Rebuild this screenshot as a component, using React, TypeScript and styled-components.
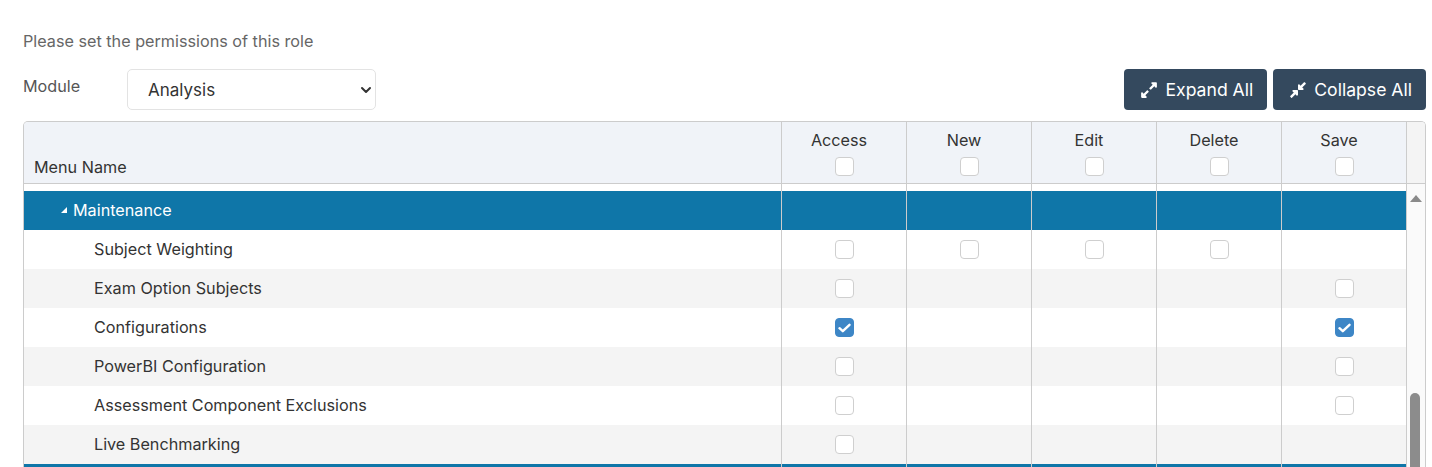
import styled, { createGlobalStyle } from "styled-components";
import { FaExpandAlt, FaCompressAlt } from "react-icons/fa";

const GlobalStyle = createGlobalStyle`
  html, body {
    margin: 0;
    padding: 0;
    height: 100%;
    overflow: hidden;
    background: #fff;
    font-family: Inter, "Noto Sans", "Liberation Sans", sans-serif;
  }
`;

const Page = styled.div`
  padding: 31px 0 0 23px;
  width: 1403px;
`;

const Intro = styled.div`
  font-size: 16.2px;
  color: #666;
  height: 20px;
  line-height: 20px;
`;

const Toolbar = styled.div`
  display: flex;
  align-items: center;
  margin-top: 18px;
  height: 41px;
`;

const Label = styled.label`
  width: 104px;
  font-size: 16.2px;
  color: #555;
  margin-top: -7px;
`;

const SelectBox = styled.div`
  position: relative;
  width: 249px;
  height: 41px;
  box-sizing: border-box;
  border: 1px solid #e3e3e3;
  border-radius: 5px;
  display: flex;
  align-items: center;
  padding-left: 20px;
  font-size: 17px;
  color: #333;
  svg {
    position: absolute;
    right: 3px;
    top: 16px;
  }
`;

const Spacer = styled.div`
  flex: 1;
`;

const ActionButton = styled.button`
  display: flex;
  align-items: center;
  gap: 7px;
  height: 41px;
  padding: 0 14px 0 16px;
  margin-left: 6px;
  border: none;
  border-radius: 4px;
  background: #34495e;
  color: #fff;
  font-family: inherit;
  font-size: 17.6px;
  svg {
    flex: none;
    width: 18px;
    height: 18px;
  }
`;

const Table = styled.div`
  margin-top: 11px;
  border: 1px solid #ccc;
  border-bottom: none;
  border-radius: 5px 5px 0 0;
  overflow: hidden;
  height: 400px;
`;

const cols = "758px repeat(5, 125px) 18px";

const HeadRow = styled.div`
  display: grid;
  grid-template-columns: ${cols};
  height: 62px;
  background: #f0f3f8;
  border-bottom: 1px solid #ccc;
  box-sizing: border-box;
  color: #333;
  font-size: 16.2px;
`;

const HeadCell = styled.div<{ $name?: boolean; $last?: boolean }>`
  border-right: ${(p) => (p.$last ? "none" : "1px solid #ccc")};
  background: ${(p) => (p.$last ? "#f4f4f4" : "transparent")};
  display: flex;
  flex-direction: column;
  align-items: ${(p) => (p.$name ? "flex-start" : "center")};
  justify-content: ${(p) => (p.$name ? "flex-end" : "flex-start")};
  padding: ${(p) => (p.$name ? "0 0 6px 10px" : "8px 0 0")};
  gap: 7px;
  line-height: 20px;
`;

const HeadLabel = styled.span`
  margin-right: 10px;
`;

const Body = styled.div`
  display: flex;
`;

const Rows = styled.div`
  flex: none;
`;

const Row = styled.div<{ $kind: "white" | "grey" | "group" | "gap" }>`
  display: grid;
  grid-template-columns: 758px repeat(5, 125px);
  height: ${(p) => (p.$kind === "gap" ? "7px" : "39px")};
  background: ${(p) =>
    p.$kind === "group" ? "#0f76a8" : p.$kind === "grey" ? "#f4f4f4" : "#fff"};
  color: ${(p) => (p.$kind === "group" ? "#fff" : "#333")};
  font-size: 16.2px;
`;

const Cell = styled.div<{ $indent?: number }>`
  border-right: 1px solid #ccc;
  display: flex;
  align-items: center;
  justify-content: ${(p) => (p.$indent !== undefined ? "flex-start" : "center")};
  padding-left: ${(p) => p.$indent ?? 0}px;
  padding-bottom: ${(p) => (p.$indent !== undefined ? "2px" : "0")};
  gap: 5px;
`;

const ScrollTrack = styled.div`
  position: relative;
  width: 18px;
  background: #fafafa;
  height: 300px;
`;

const ScrollArrow = styled.div`
  position: absolute;
  left: 3px;
  top: 11px;
  width: 0;
  height: 0;
  border-left: 6px solid transparent;
  border-right: 6px solid transparent;
  border-bottom: 7px solid #8a8a8a;
`;

const ScrollThumb = styled.div`
  position: absolute;
  left: 3px;
  top: 209px;
  width: 10px;
  height: 120px;
  border-radius: 5px;
  background: #8c8c8c;
`;

const Box = styled.span<{ $checked?: boolean }>`
  width: 19px;
  height: 19px;
  box-sizing: border-box;
  border-radius: 4px;
  border: 1px solid ${(p) => (p.$checked ? "#3d86c6" : "#cfcfcf")};
  background: ${(p) => (p.$checked ? "#3d86c6" : "#fff")};
  display: flex;
  align-items: center;
  justify-content: center;
`;

function Check({ checked }: { checked?: boolean }) {
  return (
    <Box $checked={checked}>
      {checked && (
        <svg width="13" height="10" viewBox="0 0 13 10">
          <path d="M1.5 5.2 L4.8 8.2 L11.5 1.8" fill="none" stroke="#fff" strokeWidth="2.4" strokeLinecap="round" strokeLinejoin="round" />
        </svg>
      )}
    </Box>
  );
}

type Perm = null | boolean;
const items: { name: string; perms: Perm[] }[] = [
  { name: "Subject Weighting", perms: [false, false, false, false, null] },
  { name: "Exam Option Subjects", perms: [false, null, null, null, false] },
  { name: "Configurations", perms: [true, null, null, null, true] },
  { name: "PowerBI Configuration", perms: [false, null, null, null, false] },
  { name: "Assessment Component Exclusions", perms: [false, null, null, null, false] },
  { name: "Live Benchmarking", perms: [false, null, null, null, null] },
];

const headers = ["Access", "New", "Edit", "Delete", "Save"];

export default function App() {
  return (
    <>
      <GlobalStyle />
      <Page>
        <Intro>Please set the permissions of this role</Intro>
        <Toolbar>
          <Label>Module</Label>
          <SelectBox>
            Analysis
            <svg width="12" height="8" viewBox="0 0 12 8">
              <path d="M2 2 L6 6 L10 2" fill="none" stroke="#333" strokeWidth="2" strokeLinecap="round" strokeLinejoin="round" />
            </svg>
          </SelectBox>
          <Spacer />
          <ActionButton>
            <FaExpandAlt />
            Expand All
          </ActionButton>
          <ActionButton>
            <FaCompressAlt />
            Collapse All
          </ActionButton>
        </Toolbar>
        <Table>
          <HeadRow>
            <HeadCell $name>Menu Name</HeadCell>
            {headers.map((h) => (
              <HeadCell key={h}>
                <HeadLabel>{h}</HeadLabel>
                <Check />
              </HeadCell>
            ))}
            <HeadCell $last />
          </HeadRow>
          <Body>
            <Rows>
              <Row $kind="gap">
                <Cell />
                {headers.map((h) => (
                  <Cell key={h} />
                ))}
              </Row>
              <Row $kind="group">
                <Cell $indent={36}>
                  <svg width="8" height="8" viewBox="0 0 8 8">
                    <path d="M7 1 L7 7 L1 7 Z" fill="#fff" />
                  </svg>
                  Maintenance
                </Cell>
                {headers.map((h) => (
                  <Cell key={h} />
                ))}
              </Row>
              {items.map((it, i) => (
                <Row key={it.name} $kind={i % 2 === 0 ? "white" : "grey"}>
                  <Cell $indent={70}>{it.name}</Cell>
                  {it.perms.map((p, j) => (
                    <Cell key={j}>{p !== null && <Check checked={p} />}</Cell>
                  ))}
                </Row>
              ))}
              <Row $kind="group">
                <Cell />
                {headers.map((h) => (
                  <Cell key={h} />
                ))}
              </Row>
            </Rows>
            <ScrollTrack>
              <ScrollArrow />
              <ScrollThumb />
            </ScrollTrack>
          </Body>
        </Table>
      </Page>
    </>
  );
}
